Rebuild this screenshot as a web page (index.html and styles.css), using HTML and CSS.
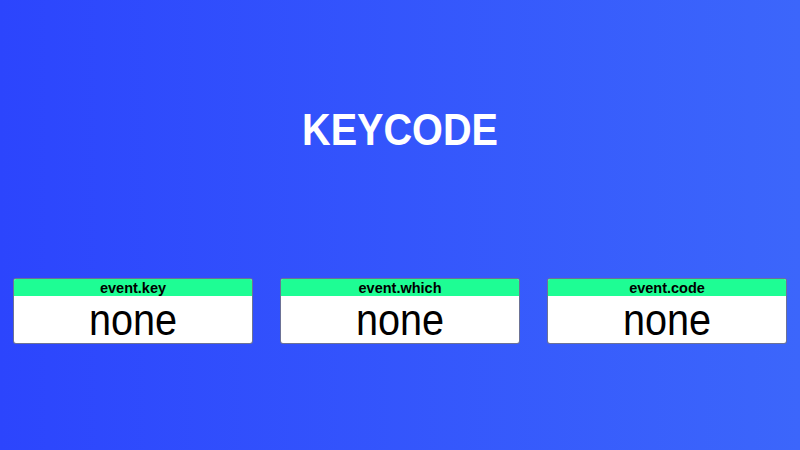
FILE: index.html
```html
<!DOCTYPE html>
<html lang="en">
<head>
    <meta charset="UTF-8">
    <meta name="viewport" content="width=device-width, initial-scale=1.0">
    <title>Keycode</title>
    <link rel="stylesheet" href="styles.css">
</head>
<body>
    <h1 class="title">KEYCODE</h1>
    <div class="boxes">
        <div class="box">
            <div class="box-label">event.key</div>
            <div class="box-value" id="key">none</div>
        </div>
        <div class="box">
            <div class="box-label">event.which</div>
            <div class="box-value" id="which">none</div>
        </div>
        <div class="box">
            <div class="box-label">event.code</div>
            <div class="box-value" id="code">none</div>
        </div>
    </div>

    <script>
        // Show the last pressed key in each box
        document.addEventListener('keydown', function(e) {
            document.getElementById('key').textContent = e.key === ' ' ? 'Space' : e.key;
            document.getElementById('which').textContent = e.which;
            document.getElementById('code').textContent = e.code;
        });
    </script>
</body>
</html>
```

FILE: styles.css
```css
html, body {
    height: 100%;
}
body {
    font-family: 'Liberation Sans', Arial, sans-serif;
    background: linear-gradient(to right, #2c45fd, #3c66fb);
    margin: 0;
    padding: 108px 13px 0;
    box-sizing: border-box;
    overflow: hidden;
}
.title {
    color: white;
    font-size: 44px;
    line-height: 1;
    margin: 0;
    text-align: center;
    transform: scaleX(0.9);
}
.boxes {
    display: flex;
    gap: 27px;
    margin-top: 126px;
}
.box {
    flex: 1;
    background-color: white;
    border: 1px solid rgba(10, 20, 80, 0.6);
    border-radius: 3px;
    overflow: hidden;
    text-align: center;
}
.box-label {
    background-color: #1efd94;
    font-size: 14.5px;
    font-weight: bold;
    height: 17px;
    line-height: 18px;
}
.box-value {
    font-size: 44px;
    height: 47px;
    line-height: 48px;
    transform: scaleX(0.9);
}
```
